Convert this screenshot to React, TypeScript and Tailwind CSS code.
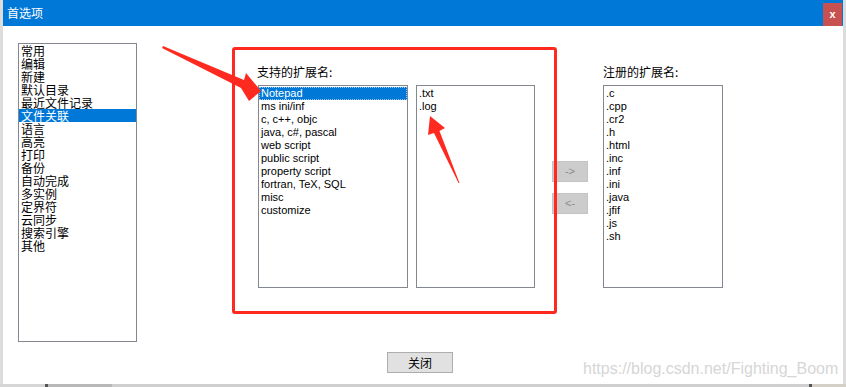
const categories = [
  "常用",
  "编辑",
  "新建",
  "默认目录",
  "最近文件记录",
  "文件关联",
  "语言",
  "高亮",
  "打印",
  "备份",
  "自动完成",
  "多实例",
  "定界符",
  "云同步",
  "搜索引擎",
  "其他",
];

const langs = [
  "Notepad",
  "ms ini/inf",
  "c, c++, objc",
  "java, c#, pascal",
  "web script",
  "public script",
  "property script",
  "fortran, TeX, SQL",
  "misc",
  "customize",
];

const registered = [".c", ".cpp", ".cr2", ".h", ".html", ".inc", ".inf", ".ini", ".java", ".jfif", ".js", ".sh"];

const cjk = { fontFamily: '"Noto Sans CJK SC", "Liberation Sans", sans-serif' };
const latin = { fontFamily: '"Liberation Sans", Arial, sans-serif' };

function ListBox({ items, selected, focus, className }: { items: string[]; selected?: number; focus?: boolean; className: string }) {
  return (
    <div className={`border border-[#828790] bg-white pt-px ${className}`}>
      {items.map((it, i) => (
        <div
          key={it}
          className={`h-[13px] pl-[2px] text-[11px] leading-[13px] whitespace-nowrap ${
            i === selected ? "bg-[#0078d7] text-white" : "text-black"
          } ${i === selected && focus ? "outline-1 outline-dotted outline-[#9cc7f0] -outline-offset-1" : ""}`}
          style={latin}
        >
          {it}
        </div>
      ))}
    </div>
  );
}

export default function App() {
  return (
    <div className="relative flex h-[387px] w-[846px] flex-col overflow-hidden bg-[#dcdcdc]">
      <div className="mx-[3px] flex h-[384px] flex-col">
        {/* title bar */}
        <div className="flex h-[26px] shrink-0 items-start justify-between bg-[#0078d7]">
          <span className="mt-[6px] pl-[4px] text-[12px] leading-[14px] text-white" style={cjk}>
            首选项
          </span>
          <div className="mt-[3px] mr-[1px] flex h-[28px] w-[19px] items-start justify-center bg-[#c75050] pt-[5px]">
            <span className="text-[11px] font-bold leading-[12px] text-white" style={latin}>
              x
            </span>
          </div>
        </div>

        {/* body */}
        <div className="flex flex-1 flex-col bg-white">
          <div className="flex items-start">
            <div className="ml-[15px] mt-[17px] h-[299px] w-[119px] border border-[#828790]">
              {categories.map((c, i) => (
                <div
                  key={c}
                  className={`h-[13px] pl-[2px] text-[12px] leading-[13px] ${i === 5 ? "bg-[#0078d7] text-white" : "text-black"}`}
                  style={cjk}
                >
                  {c}
                </div>
              ))}
            </div>

            <div className="ml-[120px] mt-[39px] flex flex-col">
              <div className="mb-[6px] h-[14px] text-[12px] leading-[14px] text-black" style={cjk}>
                支持的扩展名:
              </div>
              <div className="flex gap-[8px] pl-px">
                <ListBox items={langs} selected={0} focus className="h-[203px] w-[150px]" />
                <ListBox items={[".txt", ".log"]} className="h-[203px] w-[119px]" />
              </div>
            </div>

            <div className="ml-[17px] mt-[135px] flex flex-col gap-[11px]">
              <div className="flex h-[21px] w-[36px] items-center justify-center border border-[#c4c4c4] bg-[#cccccc] text-[11px] text-[#8a8a8a]" style={latin}>
                -&gt;
              </div>
              <div className="flex h-[21px] w-[36px] items-center justify-center border border-[#c4c4c4] bg-[#cccccc] text-[11px] text-[#8a8a8a]" style={latin}>
                &lt;-
              </div>
            </div>

            <div className="ml-[15px] mt-[39px] flex flex-col">
              <div className="mb-[6px] h-[14px] text-[12px] leading-[14px] text-black" style={cjk}>
                注册的扩展名:
              </div>
              <ListBox items={registered} className="h-[203px] w-[120px]" />
            </div>
          </div>

          <div className="ml-[384px] mt-[10px] flex h-[21px] w-[66px] items-center justify-center border border-[#adadad] bg-[#e1e1e1] text-[12px] text-black" style={cjk}>
            关闭
          </div>
        </div>
      </div>

      {/* desktop strip below the window */}
      <div className="flex h-[3px]">
        <div className="w-[45px] bg-[#d6d6d6]" />
        <div className="w-[3px] bg-[#555]" />
        <div className="w-[64px] bg-[#b8b8b8]" />
        <div className="flex-1 bg-[#cfcfcf]" />
        <div className="w-[3px] bg-[#555]" />
        <div className="w-[34px] bg-[#d4d0c8]" />
      </div>

      {/* annotations */}
      <div className="pointer-events-none absolute left-[232px] top-[47px] h-[267px] w-[325px] rounded-[3px] border-[3px] border-[#ff2a1f]" />
      <svg className="pointer-events-none absolute left-0 top-0" width="846" height="387">
        <polygon points="163,46 244,80 246,73 261,91 249,101 241,88 162,48" fill="#ff2a1f" />
        <polygon points="430,116 445,128 439.5,131 459.5,183 458.5,183 434,133 428,135" fill="#ff2a1f" />
      </svg>
      <div
        className="pointer-events-none absolute left-[583px] top-[360px] text-[16px] leading-[18px] text-[#d6d6d6]"
        style={latin}
      >
        https://blog.csdn.net/Fighting_Boom
      </div>
    </div>
  );
}
